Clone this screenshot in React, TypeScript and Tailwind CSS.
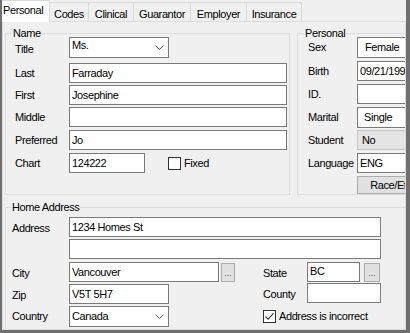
import React from 'react';

const tabs = [
  { label: 'Codes', w: 'w-[39px]' },
  { label: 'Clinical', w: 'w-[45px]' },
  { label: 'Guarantor', w: 'w-[57px]' },
  { label: 'Employer', w: 'w-[56px]' },
  { label: 'Insurance', w: 'w-[55px]' },
];

function Chevron() {
  return (
    <svg width="9" height="5" viewBox="0 0 9 5" className="shrink-0">
      <path d="M0.5 0.5 L4.5 4.5 L8.5 0.5" fill="none" stroke="#606060" strokeWidth="1" />
    </svg>
  );
}

function Field({ value = '', className = '' }: { value?: string; className?: string }) {
  return (
    <div
      className={`flex h-[20px] shrink-0 items-center overflow-hidden whitespace-nowrap border border-[#7a7a7a] bg-white pl-[2px] ${className}`}
    >
      {value}
    </div>
  );
}

function Combo({ value, className = '', textClass = '' }: { value: string; className?: string; textClass?: string }) {
  return (
    <div
      className={`flex h-[21px] shrink-0 items-center justify-between overflow-hidden whitespace-nowrap border border-[#7a7a7a] bg-white pr-[4px] ${className}`}
    >
      <span className={textClass}>{value}</span>
      <Chevron />
    </div>
  );
}

function Dots({ className = '' }: { className?: string }) {
  return (
    <div
      className={`flex h-[19px] shrink-0 items-end justify-center border border-[#adadad] bg-[#e1e1e1] pb-[3px] text-[9px] leading-[9px] tracking-normal text-[#555] ${className}`}
    >
      ...
    </div>
  );
}

function Check({ checked = false }: { checked?: boolean }) {
  return (
    <div className="flex h-[13px] w-[13px] shrink-0 items-center justify-center border border-[#333] bg-white">
      {checked && (
        <svg width="11" height="11" viewBox="0 0 11 11">
          <path d="M1.5 5.5 L4.2 8.3 L9.5 2.2" fill="none" stroke="#333" strokeWidth="1.1" />
        </svg>
      )}
    </div>
  );
}

function Label({ text, className = '' }: { text: string; className?: string }) {
  return <div className={`shrink-0 whitespace-nowrap ${className}`}>{text}</div>;
}

export default function App() {
  return (
    <div className="h-[333px] w-[410px] overflow-hidden bg-[#6f6f6f] pb-[3px] pl-[2px] pr-[4px] font-['Liberation_Sans',Arial,sans-serif] text-[11px] leading-[13px] tracking-[-0.4px] text-black">
      <div className="flex h-full flex-col bg-[#f0f0f0]">
        {/* tab strip */}
        <div className="relative z-10 flex h-[21px] shrink-0 items-end">
          <div className="mb-[-1px] flex h-[22px] w-[48px] shrink-0 items-start border border-b-0 border-l-0 border-[#d9d9d9] bg-white pl-[1px] pt-[3px]">
            Personal
          </div>
          {tabs.map(t => (
            <div
              key={t.label}
              className={`flex h-[19px] shrink-0 items-start justify-center border border-b-0 border-l-0 border-[#d9d9d9] bg-[#f0f0f0] pt-[5px] ${t.w}`}
            >
              {t.label}
            </div>
          ))}
        </div>

        {/* tab page */}
        <div className="flex min-h-0 flex-1 flex-col overflow-hidden border border-[#dcdcdc] pl-[2px] pt-[5px]">
          <div className="flex h-[168px] shrink-0 gap-[7px]">
            {/* Name */}
            <fieldset className="m-0 flex w-[285px] shrink-0 flex-col border border-[#dcdcdc] p-0">
              <legend className="ml-[6px] px-[1px] leading-[12px]">Name</legend>
              <div className="-mt-[2px] flex flex-col pl-[9px]">
                <div className="flex items-center">
                  <Label text="Title" className="w-[54px] pt-[4px]" />
                  <Combo value="Ms." className="w-[100px] pl-[2px]" textClass="-mt-[5px]" />
                </div>
                <div className="mt-[5px] flex items-center">
                  <Label text="Last" className="w-[54px]" />
                  <Field value="Farraday" className="w-[218px]" />
                </div>
                <div className="mt-[2px] flex items-center">
                  <Label text="First" className="w-[54px]" />
                  <Field value="Josephine" className="w-[218px]" />
                </div>
                <div className="mt-[2px] flex items-center">
                  <Label text="Middle" className="w-[54px]" />
                  <Field className="w-[218px]" />
                </div>
                <div className="mt-[3px] flex items-center">
                  <Label text="Preferred" className="w-[54px]" />
                  <Field value="Jo" className="w-[218px]" />
                </div>
                <div className="mt-[3px] flex items-center">
                  <Label text="Chart" className="w-[54px]" />
                  <Field value="124222" className="w-[76px]" />
                  <div className="ml-[23px] flex items-center gap-[3px]">
                    <Check />
                    <span>Fixed</span>
                  </div>
                </div>
              </div>
            </fieldset>

            {/* Personal */}
            <fieldset className="m-0 flex w-[160px] shrink-0 flex-col border border-[#dcdcdc] p-0">
              <legend className="ml-[6px] px-[1px] leading-[12px]">Personal</legend>
              <div className="-mt-[2px] flex flex-col pl-[10px]">
                <div className="flex items-center">
                  <Label text="Sex" className="w-[49px]" />
                  <Combo value="Female" className="w-[100px] pl-[7px]" />
                </div>
                <div className="mt-[3px] flex items-center">
                  <Label text="Birth" className="w-[49px]" />
                  <Field value="09/21/1995" className="w-[100px]" />
                </div>
                <div className="mt-[3px] flex items-center">
                  <Label text="ID." className="w-[49px]" />
                  <Field className="w-[100px]" />
                </div>
                <div className="mt-[3px] flex items-center">
                  <Label text="Marital" className="w-[49px]" />
                  <Combo value="Single" className="h-[20px] w-[100px] pl-[6px]" />
                </div>
                <div className="mt-[2px] flex items-center">
                  <Label text="Student" className="w-[49px]" />
                  <div className="flex h-[20px] w-[100px] shrink-0 items-center border border-[#c4c4c4] bg-[#e5e5e5] pl-[4px]">
                    No
                  </div>
                </div>
                <div className="mt-[3px] flex items-center">
                  <Label text="Language" className="w-[49px]" />
                  <Field value="ENG" className="w-[100px]" />
                </div>
                <div className="mt-[3px] flex items-center">
                  <div className="w-[49px] shrink-0" />
                  <div className="flex h-[18px] w-[91px] shrink-0 items-center justify-center whitespace-nowrap border border-[#adadad] bg-[#e1e1e1]">
                    Race/Ethnicity
                  </div>
                </div>
              </div>
            </fieldset>
          </div>

          {/* Home Address */}
          <fieldset className="m-0 mt-[6px] flex h-[140px] w-[420px] shrink-0 flex-col border border-[#dcdcdc] p-0">
            <legend className="ml-[5px] px-[1px] leading-[12px]">Home Address</legend>
            <div className="flex flex-col pl-[6px] pt-[4px]">
              <div className="flex items-center">
                <Label text="Address" className="w-[57px] pt-[3px]" />
                <Field value="1234 Homes St" className="w-[312px]" />
              </div>
              <div className="mt-[2px] flex items-center">
                <div className="w-[57px] shrink-0" />
                <Field className="w-[312px]" />
              </div>
              <div className="mt-[3px] flex items-center">
                <div className="flex w-[251px] shrink-0 items-center">
                  <Label text="City" className="w-[57px] pt-[3px]" />
                  <Field value="Vancouver" className="w-[150px]" />
                  <Dots className="ml-[2px] w-[14px]" />
                </div>
                <Label text="State" className="w-[44px] pt-[3px]" />
                <Field value="BC" className="w-[53px] pb-[1px]" />
                <Dots className="ml-[4px] w-[16px]" />
              </div>
              <div className="mt-[2px] flex items-center">
                <div className="flex w-[251px] shrink-0 items-center">
                  <Label text="Zip" className="w-[57px] pt-[2px]" />
                  <Field value="V5T 5H7" className="w-[100px]" />
                </div>
                <Label text="County" className="w-[44px]" />
                <Field className="-mt-[2px] h-[19px] w-[74px]" />
              </div>
              <div className="mt-[2px] flex items-center">
                <div className="flex w-[251px] shrink-0 items-center">
                  <Label text="Country" className="w-[57px]" />
                  <Combo value="Canada" className="w-[100px] pl-[2px]" />
                </div>
                <Check checked />
                <span className="ml-[3px] whitespace-nowrap">Address is incorrect</span>
              </div>
            </div>
          </fieldset>
        </div>
      </div>
    </div>
  );
}
